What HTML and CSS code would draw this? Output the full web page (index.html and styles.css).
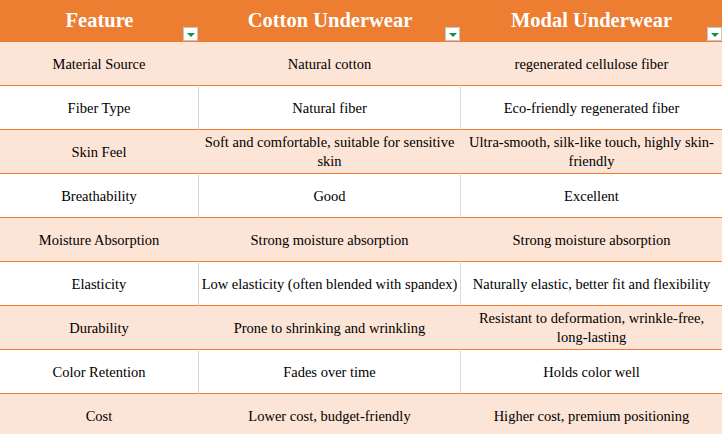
FILE: index.html
```html
<!DOCTYPE html>
<html lang="en">
<head>
<meta charset="utf-8">
<title>Cotton vs Modal Underwear</title>
<link rel="stylesheet" href="styles.css">
</head>
<body>
<div class="table">
  <div class="hcell">Feature<span class="filter"><span class="tri"></span></span></div>
  <div class="hcell">Cotton Underwear<span class="filter"><span class="tri"></span></span></div>
  <div class="hcell last">Modal Underwear<span class="filter"><span class="tri"></span></span></div>

  <div class="cell peach"><span class="txt">Material Source</span></div>
  <div class="cell peach"><span class="txt">Natural cotton</span></div>
  <div class="cell peach last"><span class="txt">regenerated cellulose fiber</span></div>

  <div class="cell"><span class="txt">Fiber Type</span></div>
  <div class="cell"><span class="txt">Natural fiber</span></div>
  <div class="cell last"><span class="txt">Eco-friendly regenerated fiber</span></div>

  <div class="cell peach"><span class="txt">Skin Feel</span></div>
  <div class="cell peach"><span class="txt">Soft and comfortable, suitable for sensitive<br>skin</span></div>
  <div class="cell peach last"><span class="txt">Ultra-smooth, silk-like touch, highly skin-<br>friendly</span></div>

  <div class="cell"><span class="txt">Breathability</span></div>
  <div class="cell"><span class="txt">Good</span></div>
  <div class="cell last"><span class="txt">Excellent</span></div>

  <div class="cell peach"><span class="txt">Moisture Absorption</span></div>
  <div class="cell peach"><span class="txt">Strong moisture absorption</span></div>
  <div class="cell peach last"><span class="txt">Strong moisture absorption</span></div>

  <div class="cell"><span class="txt">Elasticity</span></div>
  <div class="cell"><span class="txt">Low elasticity (often blended with spandex)</span></div>
  <div class="cell last"><span class="txt">Naturally elastic, better fit and flexibility</span></div>

  <div class="cell peach"><span class="txt">Durability</span></div>
  <div class="cell peach"><span class="txt">Prone to shrinking and wrinkling</span></div>
  <div class="cell peach last"><span class="txt">Resistant to deformation, wrinkle-free,<br>long-lasting</span></div>

  <div class="cell"><span class="txt">Color Retention</span></div>
  <div class="cell"><span class="txt">Fades over time</span></div>
  <div class="cell last"><span class="txt">Holds color well</span></div>

  <div class="cell peach"><span class="txt">Cost</span></div>
  <div class="cell peach"><span class="txt">Lower cost, budget-friendly</span></div>
  <div class="cell peach last"><span class="txt">Higher cost, premium positioning</span></div>
</div>
</body>
</html>
```
FILE: styles.css
```css
html, body {
  margin: 0;
  padding: 0;
  background: #ffffff;
}
body {
  font-family: "Liberation Serif", "Times New Roman", serif;
  color: #000000;
  width: 722px;
  height: 434px;
  overflow: hidden;
}
.table {
  display: grid;
  grid-template-columns: 199px 262px 261px;
  grid-template-rows: 42px repeat(9, 44px);
}
.hcell {
  position: relative;
  background: #ed7d31;
  color: #ffffff;
  font-family: "Liberation Serif", "Times New Roman", serif;
  font-weight: bold;
  font-size: 20.5px;
  display: flex;
  align-items: center;
  justify-content: center;
  padding-bottom: 1px;
  box-sizing: border-box;
}
.filter {
  position: absolute;
  right: 1px;
  bottom: 1px;
  width: 15px;
  height: 14px;
  box-sizing: border-box;
  background: #ffffff;
  border: 1px solid #c6c6c6;
  display: flex;
  align-items: center;
  justify-content: center;
}
.hcell.last .filter {
  right: 0;
}
.tri {
  width: 0;
  height: 0;
  border-left: 4px solid transparent;
  border-right: 4px solid transparent;
  border-top: 4px solid #1d8b50;
  margin-top: 1px;
}
.cell {
  box-sizing: border-box;
  display: flex;
  align-items: center;
  justify-content: center;
  text-align: center;
  border-bottom: 1px solid #ed7d31;
  border-right: 1px solid #dadada;
  background: #ffffff;
  padding: 1px 2px 0;
}
.txt {
  font-family: "Liberation Serif", "Times New Roman", serif;
  font-size: 14.5px;
  line-height: 19px;
  color: #000000;
}
.cell.last {
  border-right: none;
}
.cell.peach {
  background: #fce4d6;
  border-right-color: #fce4d6;
}
```
